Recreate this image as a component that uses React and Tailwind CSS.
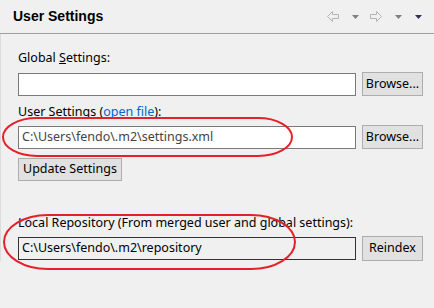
import React from 'react';

const font = { fontFamily: '"Noto Sans", "Liberation Sans", sans-serif' };

const Btn = ({ children, className = '' }) => (
  <button
    type="button"
    className={`h-[24px] w-[61px] shrink-0 border border-[#adadad] bg-[#e1e1e1] text-[12.5px] leading-none text-black ${className}`}
  >
    {children}
  </button>
);

const NavArrow = ({ dir }) => (
  <svg width="12" height="11" viewBox="0 0 12 11" className="block">
    {dir === 'left' ? (
      <path d="M0.5 5.5 L5.5 0.5 L5.5 3.5 L11.5 3.5 L11.5 7.5 L5.5 7.5 L5.5 10.5 Z" fill="none" stroke="#b4b4b4" strokeWidth="1" />
    ) : (
      <path d="M11.5 5.5 L6.5 0.5 L6.5 3.5 L0.5 3.5 L0.5 7.5 L6.5 7.5 L6.5 10.5 Z" fill="none" stroke="#b4b4b4" strokeWidth="1" />
    )}
  </svg>
);

const Caret = ({ color = '#808080' }) => (
  <svg width="7" height="4" viewBox="0 0 7 4" className="block">
    <path d="M0 0 L7 0 L3.5 4 Z" fill={color} />
  </svg>
);

export default function App() {
  return (
    <div className="relative h-[308px] w-[434px] overflow-hidden bg-[#f0f0f0]" style={font}>
      <div className="flex h-[34px] items-center justify-between border-b border-[#a0a0a0] pl-[13px] pr-[12px]">
        <span className="text-[14px] font-bold text-black" style={{ fontFamily: '"Liberation Sans", sans-serif' }}>
          User Settings
        </span>
        <div className="flex items-center">
          <NavArrow dir="left" />
          <span className="ml-[13px]"><Caret /></span>
          <span className="ml-[11px]"><NavArrow dir="right" /></span>
          <span className="ml-[13px]"><Caret /></span>
          <span className="ml-[13px]"><Caret color="#3b2a5c" /></span>
        </div>
      </div>

      <div className="border-l border-[#dcdcdc] pl-[17px] pr-[11px] pt-[15px] text-[12.5px] text-black">
        <div className="h-[17px] leading-[17px]">
          Global <span className="underline">S</span>ettings:
        </div>
        <div className="mt-[6px] flex items-center gap-[6px]">
          <div className="h-[23px] flex-1 border border-[#7a7a7a] bg-white" />
          <Btn>Browse...</Btn>
        </div>

        <div className="mt-[7px] h-[17px] leading-[17px]">
          User Settings (<span className="text-[#0066cc]">open file</span>):
        </div>
        <div className="mt-[5px] flex items-center gap-[6px]">
          <div className="flex h-[23px] flex-1 items-center border border-[#7a7a7a] bg-white pl-[3px] text-[#444]">
            C:\Users\fendo\.m2\settings.xml
          </div>
          <Btn>Browse...</Btn>
        </div>

        <button
          type="button"
          className="mt-[9px] h-[23px] border border-[#adadad] bg-[#e1e1e1] px-[4px] text-[12.5px] leading-none text-black"
        >
          Update Settings
        </button>

        <div className="mt-[33px] h-[17px] leading-[17px]">
          Local Repository (From merged user and global settings):
        </div>
        <div className="mt-[5px] flex items-center gap-[6px]">
          <div className="flex h-[23px] flex-1 items-center border border-[#333] bg-[#f0f0f0] pl-[3px] text-black">
            C:\Users\fendo\.m2\repository
          </div>
          <Btn className="h-[25px]">Reindex</Btn>
        </div>
      </div>

      <svg className="pointer-events-none absolute left-0 top-0" width="434" height="308" viewBox="0 0 434 308">
        <rect x="3" y="118" width="289" height="38" rx="34" ry="19" fill="none" stroke="#e5202b" strokeWidth="2" />
        <rect x="4" y="215" width="291" height="54" rx="44" ry="27" fill="none" stroke="#e5202b" strokeWidth="2" />
      </svg>
    </div>
  );
}
